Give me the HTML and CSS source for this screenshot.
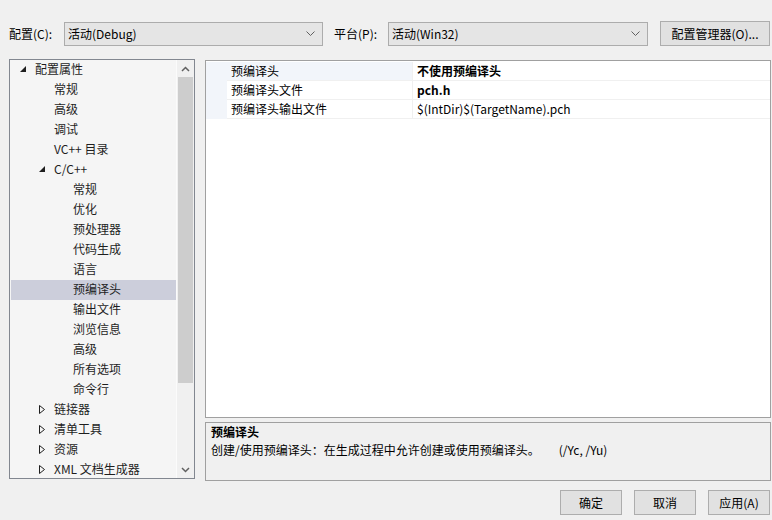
FILE: index.html
```html
<!DOCTYPE html>
<html lang="zh-CN">
<head>
    <meta charset="UTF-8">
    <title>属性页</title>
    <link rel="stylesheet" href="styles.css">
</head>
<body>
    <div class="toolbar">
        <span class="label">配置(C):</span>
        <div class="combo combo-config">
            <span>活动(Debug)</span>
            <svg class="chevron" width="9" height="6" viewBox="0 0 9 6"><polyline points="0.5,0.5 4.5,4.5 8.5,0.5" fill="none" stroke="#606060" stroke-width="1"/></svg>
        </div>
        <span class="label label-platform">平台(P):</span>
        <div class="combo combo-platform">
            <span>活动(Win32)</span>
            <svg class="chevron" width="9" height="6" viewBox="0 0 9 6"><polyline points="0.5,0.5 4.5,4.5 8.5,0.5" fill="none" stroke="#606060" stroke-width="1"/></svg>
        </div>
        <button class="btn btn-manager">配置管理器(O)...</button>
    </div>

    <div class="main">
        <div class="tree">
            <div class="tree-rows">
                <div class="node lvl0"><span class="exp"><svg width="7" height="7" viewBox="0 0 7 7"><polygon points="6,0 6,6 0,6" fill="#1e1e1e"/></svg></span>配置属性</div>
                <div class="node lvl1"><span class="exp"></span>常规</div>
                <div class="node lvl1"><span class="exp"></span>高级</div>
                <div class="node lvl1"><span class="exp"></span>调试</div>
                <div class="node lvl1"><span class="exp"></span>VC++ 目录</div>
                <div class="node lvl1"><span class="exp"><svg width="7" height="7" viewBox="0 0 7 7"><polygon points="6,0 6,6 0,6" fill="#1e1e1e"/></svg></span>C/C++</div>
                <div class="node lvl2"><span class="exp"></span>常规</div>
                <div class="node lvl2"><span class="exp"></span>优化</div>
                <div class="node lvl2"><span class="exp"></span>预处理器</div>
                <div class="node lvl2"><span class="exp"></span>代码生成</div>
                <div class="node lvl2"><span class="exp"></span>语言</div>
                <div class="node lvl2 selected"><span class="exp"></span>预编译头</div>
                <div class="node lvl2"><span class="exp"></span>输出文件</div>
                <div class="node lvl2"><span class="exp"></span>浏览信息</div>
                <div class="node lvl2"><span class="exp"></span>高级</div>
                <div class="node lvl2"><span class="exp"></span>所有选项</div>
                <div class="node lvl2"><span class="exp"></span>命令行</div>
                <div class="node lvl1"><span class="exp"><svg width="7" height="9" viewBox="0 0 7 9"><polygon points="0.5,0.5 5.5,4.5 0.5,8.5" fill="none" stroke="#1e1e1e" stroke-width="1"/></svg></span>链接器</div>
                <div class="node lvl1"><span class="exp"><svg width="7" height="9" viewBox="0 0 7 9"><polygon points="0.5,0.5 5.5,4.5 0.5,8.5" fill="none" stroke="#1e1e1e" stroke-width="1"/></svg></span>清单工具</div>
                <div class="node lvl1"><span class="exp"><svg width="7" height="9" viewBox="0 0 7 9"><polygon points="0.5,0.5 5.5,4.5 0.5,8.5" fill="none" stroke="#1e1e1e" stroke-width="1"/></svg></span>资源</div>
                <div class="node lvl1"><span class="exp"><svg width="7" height="9" viewBox="0 0 7 9"><polygon points="0.5,0.5 5.5,4.5 0.5,8.5" fill="none" stroke="#1e1e1e" stroke-width="1"/></svg></span>XML 文档生成器</div>
            </div>
            <div class="scrollbar">
                <div class="sb-arrow"><svg width="9" height="6" viewBox="0 0 9 6"><polyline points="1,5 4.5,1.5 8,5" fill="none" stroke="#606060" stroke-width="1.5"/></svg></div>
                <div class="sb-track"><div class="sb-thumb"></div></div>
                <div class="sb-arrow"><svg width="9" height="6" viewBox="0 0 9 6"><polyline points="1,1 4.5,4.5 8,1" fill="none" stroke="#606060" stroke-width="1.5"/></svg></div>
            </div>
        </div>

        <div class="right">
            <div class="grid">
                <div class="prop first">
                    <div class="gutter"></div>
                    <div class="pname">预编译头</div>
                    <div class="pvalue bold">不使用预编译头</div>
                </div>
                <div class="prop">
                    <div class="gutter"></div>
                    <div class="pname">预编译头文件</div>
                    <div class="pvalue bold">pch.h</div>
                </div>
                <div class="prop">
                    <div class="gutter"></div>
                    <div class="pname">预编译头输出文件</div>
                    <div class="pvalue">$(IntDir)$(TargetName).pch</div>
                </div>
            </div>
            <div class="desc">
                <div class="desc-title">预编译头</div>
                <div class="desc-text">创建/使用预编译头：在生成过程中允许创建或使用预编译头。<span class="switch">(/Yc, /Yu)</span></div>
            </div>
        </div>
    </div>

    <div class="footer">
        <button class="btn btn-dlg">确定</button>
        <button class="btn btn-dlg">取消</button>
        <button class="btn btn-dlg">应用(A)</button>
    </div>
</body>
</html>
```

FILE: styles.css
```css
body {
    margin: 0;
    width: 772px;
    height: 520px;
    overflow: hidden;
    background-color: #f0f0f0;
    font-family: "Noto Sans CJK SC", "Noto Sans", sans-serif;
    font-size: 12px;
    color: #000;
}
.toolbar {
    display: flex;
    align-items: center;
    height: 25px;
    padding: 21px 0 0 9px;
}
.label {
    width: 55px;
}
.label-platform {
    width: 54px;
    margin-left: 11px;
}
.combo {
    box-sizing: border-box;
    height: 24px;
    border: 1px solid #acacac;
    background-color: #e5e5e5;
    display: flex;
    align-items: center;
    justify-content: space-between;
    padding: 0 7px 0 3px;
}
.combo-config {
    width: 259px;
}
.combo-platform {
    width: 260px;
}
.chevron {
    display: block;
}
.btn {
    box-sizing: border-box;
    font-family: inherit;
    font-size: 12px;
    color: #000;
    background-color: #e1e1e1;
    border: 1px solid #adadad;
    height: 25px;
    padding: 0;
}
.btn-manager {
    width: 110px;
    margin-left: 12px;
}
.main {
    display: flex;
    margin-top: 13px;
    padding-left: 9px;
    gap: 10px;
}
.tree {
    box-sizing: border-box;
    width: 186px;
    height: 420px;
    border: 1px solid #828790;
    background-color: #f5f5f5;
    display: flex;
    overflow: hidden;
}
.tree-rows {
    width: 167px;
    border-right: 1px solid #fbfbfb;
}
.node {
    box-sizing: border-box;
    height: 20px;
    line-height: 18px;
    display: flex;
    align-items: flex-start;
    white-space: nowrap;
    color: #1e1e1e;
}
.node.selected {
    background-color: #cccedb;
    margin-left: 1px;
}
.node.selected.lvl2 {
    padding-left: 47px;
}
.exp {
    width: 15px;
    height: 19px;
    display: flex;
    align-items: center;
}
.lvl0 {
    padding-left: 10px;
}
.lvl1 {
    padding-left: 29px;
}
.lvl2 {
    padding-left: 48px;
}
.scrollbar {
    width: 17px;
    display: flex;
    flex-direction: column;
    background-color: #f0f0f0;
}
.sb-arrow {
    height: 17px;
    display: flex;
    align-items: center;
    justify-content: center;
}
.sb-track {
    flex: 1;
    padding: 0 1px;
}
.sb-thumb {
    height: 306px;
    background-color: #cdcdcd;
}
.right {
    width: 566px;
    display: flex;
    flex-direction: column;
    gap: 4px;
}
.grid {
    box-sizing: border-box;
    height: 358px;
    margin-top: 1px;
    border: 1px solid #a0a0a0;
    background-color: #fff;
    padding-top: 1px;
}
.prop {
    display: flex;
    height: 19px;
    line-height: 17px;
}
.gutter {
    width: 21px;
    background-color: #f2f5fa;
}
.pname {
    box-sizing: border-box;
    width: 186px;
    padding-left: 4px;
    border-bottom: 1px solid #f0f0f0;
    border-right: 1px solid #f0f0f0;
}
.first .pname {
    background-color: #f2f5fa;
}
.pvalue {
    flex: 1;
    padding-left: 4px;
    border-bottom: 1px solid #f0f0f0;
}
.bold {
    font-weight: bold;
}
.desc {
    box-sizing: border-box;
    height: 59px;
    border: 1px solid #a0a0a0;
    background-color: #f0f0f0;
    padding: 0 0 0 5px;
    line-height: 18px;
}
.desc-title {
    font-weight: bold;
}
.switch {
    margin-left: 19px;
}
.footer {
    display: flex;
    justify-content: flex-end;
    gap: 12px;
    margin-top: 9px;
    padding-right: 2px;
}
.btn-dlg {
    width: 62px;
}
```
